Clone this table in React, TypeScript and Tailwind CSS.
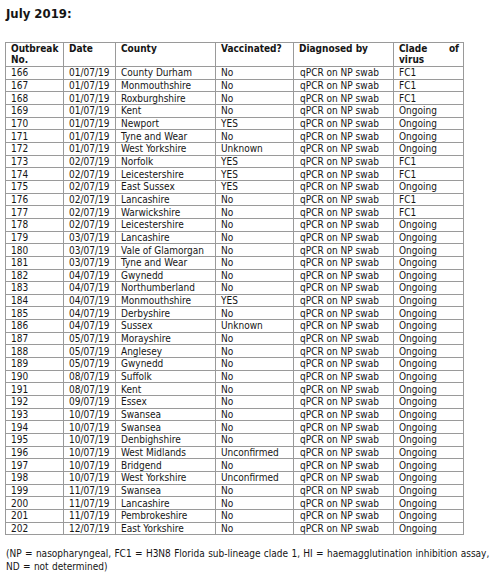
import React from "react";

const rows: [string, string, string, string, string][] = [
  ["166", "01/07/19", "County Durham", "No", "FC1"],
  ["167", "01/07/19", "Monmouthshire", "No", "FC1"],
  ["168", "01/07/19", "Roxburghshire", "No", "FC1"],
  ["169", "01/07/19", "Kent", "No", "Ongoing"],
  ["170", "01/07/19", "Newport", "YES", "Ongoing"],
  ["171", "01/07/19", "Tyne and Wear", "No", "Ongoing"],
  ["172", "01/07/19", "West Yorkshire", "Unknown", "Ongoing"],
  ["173", "02/07/19", "Norfolk", "YES", "FC1"],
  ["174", "02/07/19", "Leicestershire", "YES", "FC1"],
  ["175", "02/07/19", "East Sussex", "YES", "Ongoing"],
  ["176", "02/07/19", "Lancashire", "No", "FC1"],
  ["177", "02/07/19", "Warwickshire", "No", "FC1"],
  ["178", "02/07/19", "Leicestershire", "No", "Ongoing"],
  ["179", "03/07/19", "Lancashire", "No", "Ongoing"],
  ["180", "03/07/19", "Vale of Glamorgan", "No", "Ongoing"],
  ["181", "03/07/19", "Tyne and Wear", "No", "Ongoing"],
  ["182", "04/07/19", "Gwynedd", "No", "Ongoing"],
  ["183", "04/07/19", "Northumberland", "No", "Ongoing"],
  ["184", "04/07/19", "Monmouthshire", "YES", "Ongoing"],
  ["185", "04/07/19", "Derbyshire", "No", "Ongoing"],
  ["186", "04/07/19", "Sussex", "Unknown", "Ongoing"],
  ["187", "05/07/19", "Morayshire", "No", "Ongoing"],
  ["188", "05/07/19", "Anglesey", "No", "Ongoing"],
  ["189", "05/07/19", "Gwynedd", "No", "Ongoing"],
  ["190", "08/07/19", "Suffolk", "No", "Ongoing"],
  ["191", "08/07/19", "Kent", "No", "Ongoing"],
  ["192", "09/07/19", "Essex", "No", "Ongoing"],
  ["193", "10/07/19", "Swansea", "No", "Ongoing"],
  ["194", "10/07/19", "Swansea", "No", "Ongoing"],
  ["195", "10/07/19", "Denbighshire", "No", "Ongoing"],
  ["196", "10/07/19", "West Midlands", "Unconfirmed", "Ongoing"],
  ["197", "10/07/19", "Bridgend", "No", "Ongoing"],
  ["198", "10/07/19", "West Yorkshire", "Unconfirmed", "Ongoing"],
  ["199", "11/07/19", "Swansea", "No", "Ongoing"],
  ["200", "11/07/19", "Lancashire", "No", "Ongoing"],
  ["201", "11/07/19", "Pembrokeshire", "No", "Ongoing"],
  ["202", "12/07/19", "East Yorkshire", "No", "Ongoing"],
];

const thBase =
  "border border-[#9a9a9a] align-top font-bold px-[5px] pt-[1px] pb-0 leading-[10.5px]";
const th = thBase + " text-left";
const td =
  "border border-[#9a9a9a] h-[12.67px] px-[5px] py-0 leading-[11px] whitespace-nowrap align-middle";

export default function App() {
  return (
    <div
      className="w-[491px] h-[575px] bg-white text-[#151515] overflow-hidden"
      style={{ fontFamily: '"DejaVu Sans Condensed", "DejaVu Sans", sans-serif' }}
    >
      <div className="pl-[6px] pt-[6px] text-[13px] leading-[16px] font-bold">July 2019:</div>
      <table className="ml-[5px] mt-[20px] w-[458px] table-fixed border-collapse text-[10px]">
        <colgroup>
          <col className="w-[58px]" />
          <col className="w-[52px]" />
          <col className="w-[100px]" />
          <col className="w-[78px]" />
          <col className="w-[100px]" />
          <col className="w-[70px]" />
        </colgroup>
        <thead>
          <tr className="h-[24px]">
            <th className={th}>
              Outbreak
              <br />
              No.
            </th>
            <th className={th}>Date</th>
            <th className={th}>County</th>
            <th className={th}>Vaccinated?</th>
            <th className={th}>Diagnosed by</th>
            <th className={thBase + " text-justify pr-[4px]"}>Clade of virus</th>
          </tr>
        </thead>
        <tbody>
          {rows.map((r) => (
            <tr key={r[0]}>
              <td className={td}>{r[0]}</td>
              <td className={td}>{r[1]}</td>
              <td className={td}>{r[2]}</td>
              <td className={td}>{r[3]}</td>
              <td className={td + " pl-[6px]"}>qPCR on NP swab</td>
              <td className={td}>{r[4]}</td>
            </tr>
          ))}
        </tbody>
      </table>
      <div className="pl-[6px] mt-[13px] text-[10px] leading-[12.5px] whitespace-nowrap [word-spacing:0.5px]">
        (NP = nasopharyngeal, FC1 = H3N8 Florida sub-lineage clade 1, HI = haemagglutination inhibition assay,
        <br />
        ND = not determined)
      </div>
    </div>
  );
}
